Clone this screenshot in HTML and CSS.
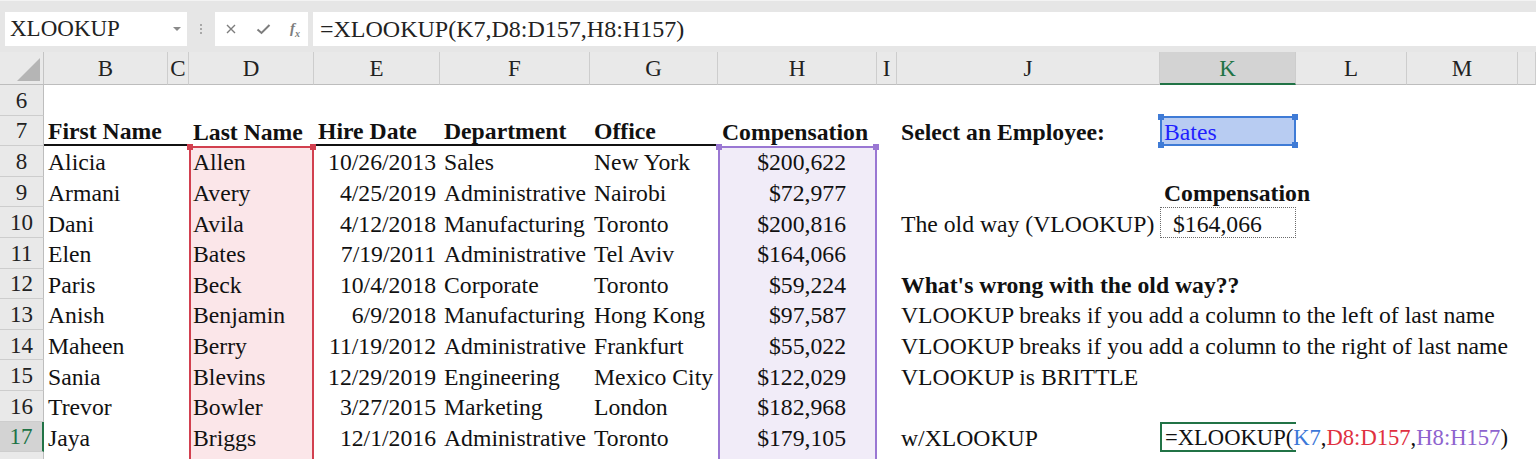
FILE: index.html
```html
<!DOCTYPE html>
<html lang="en">
<head>
  <meta charset="UTF-8" />
  <meta name="viewport" content="width=device-width, initial-scale=1.0" />
  <title>XLOOKUP</title>
  <link rel="stylesheet" href="styles.css">
</head>
<body>
  <div class="toolbar">
    <div class="namebox">
      <span>XLOOKUP</span>
      <svg class="drop" width="8" height="5" viewBox="0 0 8 5"><path d="M0 0 L8 0 L4 4 Z" fill="#8a8a8a"/></svg>
    </div>
    <div class="grip"><i></i><i></i><i></i></div>
    <div class="fxbox">
      <svg width="12" height="12" viewBox="0 0 12 12"><path d="M2 2 L10 10 M10 2 L2 10" stroke="#7d7d7d" stroke-width="1.4"/></svg>
      <svg width="15" height="12" viewBox="0 0 15 12"><path d="M1.5 6.5 L5.5 10 L13.5 2" stroke="#7d7d7d" stroke-width="2" fill="none"/></svg>
      <span class="fx">f<sub>x</sub></span>
    </div>
    <div class="formula">=XLOOKUP(K7,D8:D157,H8:H157)</div>
  </div>

  <div class="sheet" id="sheet"></div>

  <script>
    const cols = ['B','C','D','E','F','G','H','I','J','K','L','M'];

    const people = [
      ['Alicia','Allen','10/26/2013','Sales','New York','$200,622'],
      ['Armani','Avery','4/25/2019','Administrative','Nairobi','$72,977'],
      ['Dani','Avila','4/12/2018','Manufacturing','Toronto','$200,816'],
      ['Elen','Bates','7/19/2011','Administrative','Tel Aviv','$164,066'],
      ['Paris','Beck','10/4/2018','Corporate','Toronto','$59,224'],
      ['Anish','Benjamin','6/9/2018','Manufacturing','Hong Kong','$97,587'],
      ['Maheen','Berry','11/19/2012','Administrative','Frankfurt','$55,022'],
      ['Sania','Blevins','12/29/2019','Engineering','Mexico City','$122,029'],
      ['Trevor','Bowler','3/27/2015','Marketing','London','$182,968'],
      ['Jaya','Briggs','12/1/2016','Administrative','Toronto','$179,105']
    ];

    const side = {
      7: { J: ['bold', 'Select an Employee:'], K: ['pick', 'Bates<b class="h tl"></b><b class="h tr"></b><b class="h bl"></b><b class="h br"></b>'] },
      9: { K: ['bold', 'Compensation'] },
      10: { J: ['', 'The old way (VLOOKUP)'], K: ['dotted', '$164,066'] },
      12: { J: ['bold', "What's wrong with the old way??"] },
      13: { J: ['', 'VLOOKUP breaks if you add a column to the left of last name'] },
      14: { J: ['', 'VLOOKUP breaks if you add a column to the right of last name'] },
      15: { J: ['', 'VLOOKUP is BRITTLE'] },
      17: { J: ['', 'w/XLOOKUP'], K: ['editing', '=XLOOKUP(<span class="ref-k">K7</span>,<span class="ref-d">D8:D157</span>,<span class="ref-h">H8:H157</span>)'] }
    };

    function renderSheet() {
      let html = '<div class="corner"><span class="tri"></span></div>';
      cols.forEach(c => {
        html += `<div class="colhead${c === 'K' ? ' active' : ''}">${c}</div>`;
      });
      html += '<div class="colhead"></div>';

      for (let r = 6; r <= 18; r++) {
        const cells = {};
        if (r === 7) {
          ['B','C','E','F','G'].forEach(c => cells[c] = ['head', '']);
          cells.B = ['head', 'First Name'];
          cells.D = ['bold', 'Last Name'];
          cells.E = ['head', 'Hire Date'];
          cells.F = ['head', 'Department'];
          cells.G = ['head', 'Office'];
          cells.H = ['bold', 'Compensation'];
        }
        const p = people[r - 8];
        if (r >= 8) {
          cells.D = ['red-range' + (r === 8 ? ' red-top' : ''), p ? p[1] : ''];
          cells.H = ['purple-range right' + (r === 8 ? ' purple-top' : ''), p ? p[5] : ''];
        }
        if (p) {
          cells.B = ['', p[0]];
          cells.E = ['right', p[2]];
          cells.F = ['', p[3]];
          cells.G = ['', p[4]];
        }
        Object.assign(cells, side[r] || {});

        // row 18 is only a sliver at the bottom edge, its number is not visible
        const label = r < 18 ? r : '';
        html += `<div class="rowhead${r === 17 ? ' active' : ''}">${label}</div>`;
        cols.forEach(c => {
          const [cls, text] = cells[c] || ['', ''];
          let extra = '';
          if (r === 8 && c === 'D') extra = '<b class="h tl red"></b><b class="h tr red"></b>';
          if (r === 8 && c === 'H') extra = '<b class="h tl purple"></b><b class="h tr purple"></b>';
          html += `<div class="cell ${cls}">${text}${extra}</div>`;
        });
        html += '<div class="cell"></div>';
      }
      document.getElementById('sheet').innerHTML = html;
    }

    renderSheet();
  </script>
</body>
</html>
```

FILE: styles.css
```css
body {
  margin: 0;
  font-family: "Liberation Serif", "Times New Roman", serif;
  background-color: #ffffff;
  color: #111111;
  overflow: hidden;
}
.toolbar {
  height: 52px;
  box-sizing: border-box;
  padding: 11px 0 0 5px;
  background-color: #e6e6e6;
  border-top: 1px solid #f3f3f3;
  display: flex;
  align-items: flex-start;
}
.namebox {
  width: 182px;
  height: 34px;
  box-sizing: border-box;
  padding: 0 6px 0 5px;
  background-color: #ffffff;
  display: flex;
  align-items: center;
  justify-content: space-between;
  font-size: 23px;
  color: #222222;
}
.grip {
  width: 28px;
  height: 34px;
  display: flex;
  flex-direction: column;
  align-items: center;
  justify-content: center;
  gap: 2px;
}
.grip i {
  width: 2px;
  height: 2px;
  background-color: #a8a8a8;
}
.fxbox {
  width: 93px;
  height: 34px;
  box-sizing: border-box;
  padding: 0 8px 0 10px;
  margin-right: 5px;
  background-color: #ffffff;
  display: flex;
  align-items: center;
  justify-content: space-between;
}
.fx {
  font-style: italic;
  font-weight: bold;
  font-size: 15px;
  color: #7d7d7d;
}
.fx sub {
  font-size: 10px;
}
.formula {
  flex: 1;
  height: 34px;
  box-sizing: border-box;
  padding-left: 7px;
  background-color: #ffffff;
  display: flex;
  align-items: center;
  font-size: 24px;
  color: #222222;
}
.sheet {
  display: grid;
  grid-template-columns: 44px 124px 21px 125px 126px 150px 128px 159px 20px 263px 136px 111px 111px 18px;
  grid-template-rows: 33px repeat(13, 30.6px);
}
.corner, .colhead, .rowhead {
  background-color: #e9e9e9;
  color: #222222;
  font-size: 23px;
  display: flex;
  align-items: center;
  justify-content: center;
  box-sizing: border-box;
}
.corner {
  position: relative;
  border-right: 1px solid #c4c4c4;
  border-bottom: 1px solid #bdbdbd;
}
.tri {
  position: absolute;
  right: 3px;
  bottom: 3px;
  width: 23px;
  height: 23px;
  background-color: #b5b5b5;
  clip-path: polygon(100% 0, 100% 100%, 0 100%);
}
.colhead {
  border-right: 1px solid #cdcdcd;
  border-bottom: 1px solid #bdbdbd;
  padding-top: 2px;
}
.colhead.active {
  background-color: #d3d3d3;
  color: #217346;
  border-bottom: 2px solid #217346;
}
.rowhead {
  border-right: 1px solid #bdbdbd;
  border-bottom: 1px solid #cdcdcd;
  padding-top: 2px;
}
.rowhead.active {
  background-color: #d3d3d3;
  color: #217346;
  border-right: 2px solid #217346;
}
.cell {
  position: relative;
  box-sizing: border-box;
  padding: 3px 4px 0;
  display: flex;
  align-items: center;
  white-space: nowrap;
  font-size: 23.7px;
  overflow: visible;
}
.bold, .head {
  font-weight: bold;
}
.head {
  border-bottom: 2px solid #111111;
}
.right {
  justify-content: flex-end;
}
.red-range {
  background-color: #fbe6e9;
  box-shadow: inset 2px 0 #d2404f, inset -2px 0 #d2404f;
}
.red-top {
  box-shadow: inset 2px 0 #d2404f, inset -2px 0 #d2404f, inset 0 2px #d2404f;
}
.purple-range {
  background-color: #f1ecf8;
  padding-right: 31px;
  box-shadow: inset 2px 0 #9a77d3, inset -2px 0 #9a77d3;
}
.purple-top {
  box-shadow: inset 2px 0 #9a77d3, inset -2px 0 #9a77d3, inset 0 2px #9a77d3;
}
.pick {
  background-color: #b8ccf2;
  color: #1f1fff;
  box-shadow: inset 0 0 0 2px #3f7bd6;
}
.dotted {
  border: 1px dotted #6a6a6a;
  padding-left: 12px;
}
.editing {
  padding-left: 3px;
  border: 2px solid #217346;
  border-right-width: 0;
  font-size: 22.6px;
  z-index: 1;
}
.ref-k {
  color: #3c78d8;
}
.ref-d {
  color: #e0303f;
}
.ref-h {
  color: #8e63ce;
}
.h {
  position: absolute;
  width: 6px;
  height: 6px;
  background-color: #3f7bd6;
}
.h.red {
  background-color: #d2404f;
}
.h.purple {
  background-color: #9a77d3;
}
.tl { left: -2px; top: -2px; }
.tr { right: -2px; top: -2px; }
.bl { left: -2px; bottom: -2px; }
.br { right: -2px; bottom: -2px; }
```
